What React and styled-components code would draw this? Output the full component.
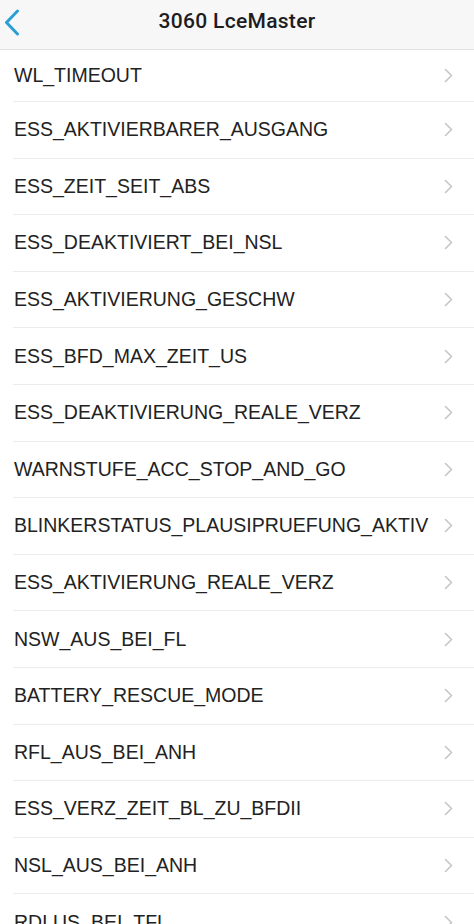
import styled, { createGlobalStyle } from 'styled-components'

const GlobalStyle = createGlobalStyle`
  body {
    margin: 0;
    background: #ffffff;
    font-family: "Liberation Sans", Arial, sans-serif;
    overflow: hidden;
  }
`

const Screen = styled.div`
  width: 474px;
  height: 924px;
  overflow: hidden;
  background: #ffffff;
`

const NavBar = styled.header`
  display: grid;
  grid-template-columns: 60px 1fr 60px;
  align-items: center;
  height: 49px;
  background: #f7f7f8;
  border-bottom: 1px solid #e2e2e4;
`

const BackButton = styled.button`
  display: flex;
  align-items: center;
  height: 100%;
  padding: 0 0 4px 4px;
  border: none;
  background: none;
`

const Title = styled.h1`
  margin: 0 0 8px;
  text-align: center;
  font-size: 21px;
  font-weight: 500;
  color: #1d1d1f;
  font-family: Roboto, "Liberation Sans", sans-serif;
  letter-spacing: 0.3px;
`

const List = styled.ul`
  list-style: none;
  margin: 0;
  padding: 0;
`

const Row = styled.li`
  display: flex;
  align-items: center;
  justify-content: space-between;
  height: ${(p) => (p.$first ? '52px' : '56.6px')};
  margin-left: 13px;
  padding-right: 21px;
  border-bottom: 1px solid #ececee;
  box-sizing: border-box;
`

const Label = styled.span`
  font-size: 19.5px;
  color: #222222;
  padding-left: 1px;
  white-space: nowrap;
`

const Chevron = () => (
  <svg width="9" height="15" viewBox="0 0 9 15">
    <path d="M1.5 1.5 L7.5 7.5 L1.5 13.5" fill="none" stroke="#c6c6ca" strokeWidth="1.6" strokeLinecap="round" strokeLinejoin="round" />
  </svg>
)

const BackArrow = () => (
  <svg width="16" height="27" viewBox="0 0 16 27">
    <path d="M13.5 2 L2.5 13.5 L13.5 25" fill="none" stroke="#2b9ed6" strokeWidth="3" strokeLinecap="round" strokeLinejoin="round" />
  </svg>
)

const items = [
  'WL_TIMEOUT',
  'ESS_AKTIVIERBARER_AUSGANG',
  'ESS_ZEIT_SEIT_ABS',
  'ESS_DEAKTIVIERT_BEI_NSL',
  'ESS_AKTIVIERUNG_GESCHW',
  'ESS_BFD_MAX_ZEIT_US',
  'ESS_DEAKTIVIERUNG_REALE_VERZ',
  'WARNSTUFE_ACC_STOP_AND_GO',
  'BLINKERSTATUS_PLAUSIPRUEFUNG_AKTIV',
  'ESS_AKTIVIERUNG_REALE_VERZ',
  'NSW_AUS_BEI_FL',
  'BATTERY_RESCUE_MODE',
  'RFL_AUS_BEI_ANH',
  'ESS_VERZ_ZEIT_BL_ZU_BFDII',
  'NSL_AUS_BEI_ANH',
  'RDLUS_BEI_TFL'
]

function App() {
  return (
    <>
      <GlobalStyle />
      <Screen>
        <NavBar>
          <BackButton>
            <BackArrow />
          </BackButton>
          <Title>3060 LceMaster</Title>
          <span />
        </NavBar>
        <List>
          {items.map((item, index) => (
            <Row key={item} $first={index === 0}>
              <Label>{item}</Label>
              <Chevron />
            </Row>
          ))}
        </List>
      </Screen>
    </>
  )
}

export default App
